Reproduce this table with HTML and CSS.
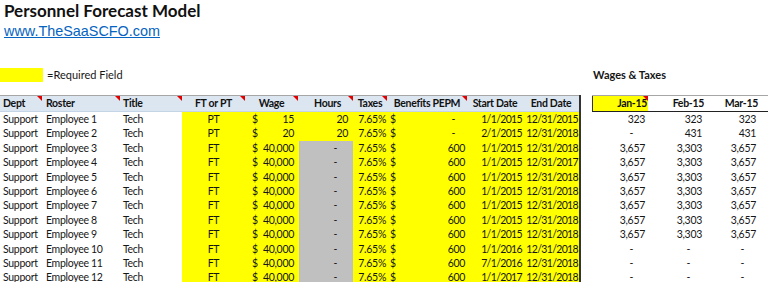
FILE: index.html
```html
<!DOCTYPE html>
<html lang="en">
<head>
<meta charset="utf-8">
<title>Personnel Forecast Model</title>
<link rel="stylesheet" href="styles.css">
</head>
<body>
<div class="title">Personnel Forecast Model</div>
<a class="site" href="#">www.TheSaaSCFO.com</a>
<div class="legend">
  <div class="legend-left"><span class="swatch"></span><span>=Required Field</span></div>
  <div class="legend-right">Wages &amp; Taxes</div>
</div>
<div class="sheet">
  <div class="roster">
    <div class="row head">
      <div class="c l note">Dept</div>
      <div class="c l2 note">Roster</div>
      <div class="c l3 note">Title</div>
      <div class="c ctr note">FT or PT</div>
      <div class="c ctr note">Wage</div>
      <div class="c ctr note hrs-h">Hours</div>
      <div class="c ctr note">Taxes</div>
      <div class="c ctr note">Benefits PEPM</div>
      <div class="c ctr">Start Date</div>
      <div class="c ctr">End Date</div>
    </div>
    <div class="row">
      <div class="c l">Support</div><div class="c l2">Employee 1</div><div class="c l3">Tech</div>
      <div class="c ctr y">PT</div>
      <div class="c money y"><span>$</span><span>15</span></div>
      <div class="c r hrs y">20</div>
      <div class="c r tax y">7.65%</div>
      <div class="c money ben y"><span>$</span><span class="dash">-</span></div>
      <div class="c r date y">1/1/2015</div>
      <div class="c r date y">12/31/2015</div>
    </div>
    <div class="row">
      <div class="c l">Support</div><div class="c l2">Employee 2</div><div class="c l3">Tech</div>
      <div class="c ctr y">PT</div>
      <div class="c money y"><span>$</span><span>20</span></div>
      <div class="c r hrs y">20</div>
      <div class="c r tax y">7.65%</div>
      <div class="c money ben y"><span>$</span><span class="dash">-</span></div>
      <div class="c r date y">2/1/2015</div>
      <div class="c r date y">12/31/2018</div>
    </div>
    <div class="row">
      <div class="c l">Support</div><div class="c l2">Employee 3</div><div class="c l3">Tech</div>
      <div class="c ctr y">FT</div>
      <div class="c money y"><span>$</span><span>40,000</span></div>
      <div class="c r hrs g"><span class="dash">-</span></div>
      <div class="c r tax y">7.65%</div>
      <div class="c money ben y"><span>$</span><span>600</span></div>
      <div class="c r date y">1/1/2015</div>
      <div class="c r date y">12/31/2018</div>
    </div>
    <div class="row">
      <div class="c l">Support</div><div class="c l2">Employee 4</div><div class="c l3">Tech</div>
      <div class="c ctr y">FT</div>
      <div class="c money y"><span>$</span><span>40,000</span></div>
      <div class="c r hrs g"><span class="dash">-</span></div>
      <div class="c r tax y">7.65%</div>
      <div class="c money ben y"><span>$</span><span>600</span></div>
      <div class="c r date y">1/1/2015</div>
      <div class="c r date y">12/31/2017</div>
    </div>
    <div class="row">
      <div class="c l">Support</div><div class="c l2">Employee 5</div><div class="c l3">Tech</div>
      <div class="c ctr y">FT</div>
      <div class="c money y"><span>$</span><span>40,000</span></div>
      <div class="c r hrs g"><span class="dash">-</span></div>
      <div class="c r tax y">7.65%</div>
      <div class="c money ben y"><span>$</span><span>600</span></div>
      <div class="c r date y">1/1/2015</div>
      <div class="c r date y">12/31/2018</div>
    </div>
    <div class="row">
      <div class="c l">Support</div><div class="c l2">Employee 6</div><div class="c l3">Tech</div>
      <div class="c ctr y">FT</div>
      <div class="c money y"><span>$</span><span>40,000</span></div>
      <div class="c r hrs g"><span class="dash">-</span></div>
      <div class="c r tax y">7.65%</div>
      <div class="c money ben y"><span>$</span><span>600</span></div>
      <div class="c r date y">1/1/2015</div>
      <div class="c r date y">12/31/2018</div>
    </div>
    <div class="row">
      <div class="c l">Support</div><div class="c l2">Employee 7</div><div class="c l3">Tech</div>
      <div class="c ctr y">FT</div>
      <div class="c money y"><span>$</span><span>40,000</span></div>
      <div class="c r hrs g"><span class="dash">-</span></div>
      <div class="c r tax y">7.65%</div>
      <div class="c money ben y"><span>$</span><span>600</span></div>
      <div class="c r date y">1/1/2015</div>
      <div class="c r date y">12/31/2018</div>
    </div>
    <div class="row">
      <div class="c l">Support</div><div class="c l2">Employee 8</div><div class="c l3">Tech</div>
      <div class="c ctr y">FT</div>
      <div class="c money y"><span>$</span><span>40,000</span></div>
      <div class="c r hrs g"><span class="dash">-</span></div>
      <div class="c r tax y">7.65%</div>
      <div class="c money ben y"><span>$</span><span>600</span></div>
      <div class="c r date y">1/1/2015</div>
      <div class="c r date y">12/31/2018</div>
    </div>
    <div class="row">
      <div class="c l">Support</div><div class="c l2">Employee 9</div><div class="c l3">Tech</div>
      <div class="c ctr y">FT</div>
      <div class="c money y"><span>$</span><span>40,000</span></div>
      <div class="c r hrs g"><span class="dash">-</span></div>
      <div class="c r tax y">7.65%</div>
      <div class="c money ben y"><span>$</span><span>600</span></div>
      <div class="c r date y">1/1/2015</div>
      <div class="c r date y">12/31/2018</div>
    </div>
    <div class="row">
      <div class="c l">Support</div><div class="c l2">Employee 10</div><div class="c l3">Tech</div>
      <div class="c ctr y">FT</div>
      <div class="c money y"><span>$</span><span>40,000</span></div>
      <div class="c r hrs g"><span class="dash">-</span></div>
      <div class="c r tax y">7.65%</div>
      <div class="c money ben y"><span>$</span><span>600</span></div>
      <div class="c r date y">1/1/2016</div>
      <div class="c r date y">12/31/2018</div>
    </div>
    <div class="row">
      <div class="c l">Support</div><div class="c l2">Employee 11</div><div class="c l3">Tech</div>
      <div class="c ctr y">FT</div>
      <div class="c money y"><span>$</span><span>40,000</span></div>
      <div class="c r hrs g"><span class="dash">-</span></div>
      <div class="c r tax y">7.65%</div>
      <div class="c money ben y"><span>$</span><span>600</span></div>
      <div class="c r date y">7/1/2016</div>
      <div class="c r date y">12/31/2018</div>
    </div>
    <div class="row">
      <div class="c l">Support</div><div class="c l2">Employee 12</div><div class="c l3">Tech</div>
      <div class="c ctr y">FT</div>
      <div class="c money y"><span>$</span><span>40,000</span></div>
      <div class="c r hrs g"><span class="dash">-</span></div>
      <div class="c r tax y">7.65%</div>
      <div class="c money ben y"><span>$</span><span>600</span></div>
      <div class="c r date y">1/1/2017</div>
      <div class="c r date y">12/31/2018</div>
    </div>
  </div>
  <div class="wages">
    <div class="wrow whead">
      <div class="m jan note">Jan-15</div>
      <div class="m">Feb-15</div>
      <div class="m">Mar-15</div>
      <div></div>
    </div>
    <div class="wrow"><div class="m">323</div><div class="m">323</div><div class="m">323</div><div></div></div>
    <div class="wrow"><div class="m"><span class="dash">-</span></div><div class="m">431</div><div class="m">431</div><div></div></div>
    <div class="wrow"><div class="m">3,657</div><div class="m">3,303</div><div class="m">3,657</div><div></div></div>
    <div class="wrow"><div class="m">3,657</div><div class="m">3,303</div><div class="m">3,657</div><div></div></div>
    <div class="wrow"><div class="m">3,657</div><div class="m">3,303</div><div class="m">3,657</div><div></div></div>
    <div class="wrow"><div class="m">3,657</div><div class="m">3,303</div><div class="m">3,657</div><div></div></div>
    <div class="wrow"><div class="m">3,657</div><div class="m">3,303</div><div class="m">3,657</div><div></div></div>
    <div class="wrow"><div class="m">3,657</div><div class="m">3,303</div><div class="m">3,657</div><div></div></div>
    <div class="wrow"><div class="m">3,657</div><div class="m">3,303</div><div class="m">3,657</div><div></div></div>
    <div class="wrow"><div class="m"><span class="dash">-</span></div><div class="m"><span class="dash">-</span></div><div class="m"><span class="dash">-</span></div><div></div></div>
    <div class="wrow"><div class="m"><span class="dash">-</span></div><div class="m"><span class="dash">-</span></div><div class="m"><span class="dash">-</span></div><div></div></div>
    <div class="wrow"><div class="m"><span class="dash">-</span></div><div class="m"><span class="dash">-</span></div><div class="m"><span class="dash">-</span></div><div></div></div>
  </div>
</div>
</body>
</html>
```
FILE: styles.css
```css
* { box-sizing: content-box; }
html, body { margin: 0; padding: 0; background: #ffffff; }
body {
  font-family: Lato, "Open Sans", sans-serif;
  font-size: 11px;
  color: #161616;
  overflow: hidden;
}
.title {
  font-weight: 700;
  font-size: 17px;
  line-height: 22px;
  padding-left: 4px;
  color: #111;
}
.site {
  display: inline-block;
  margin-left: 4px;
  font-family: "Liberation Sans", Arial, sans-serif;
  font-size: 14.4px;
  line-height: 19px;
  color: #0563c1;
  text-decoration: underline;
}
.legend {
  display: flex;
  margin-top: 27px;
  height: 14px;
  line-height: 14px;
}
.legend-left {
  width: 593px;
  display: flex;
  gap: 4px;
}
.swatch {
  width: 43px;
  background: #ffff00;
}
.legend-right { font-weight: 700; }

.sheet {
  display: flex;
  align-items: flex-start;
  margin-top: 13px;
  font-size: 10.5px;
  letter-spacing: -0.3px;
}
.roster {
  width: 579px;
  border-right: 2px solid #333;
}
.row {
  display: grid;
  grid-template-columns: 42px 78px 62px 63px 53px 55px 34px 80px 56px 56px;
  height: 14.4px;
  line-height: 14.4px;
  white-space: nowrap;
}
.head {
  height: 15px;
  line-height: 15px;
  background: #dce6f1;
  border-top: 1px solid #a6a6a6;
  border-bottom: 1px solid #c5d5e8;
  font-weight: 700;
  color: #111;
}
.c { position: relative; overflow: visible; }
.l { padding-left: 3px; }
.l2 { padding-left: 4px; }
.l3 { padding-left: 3px; }
.ctr { text-align: center; }
.r { text-align: right; }
.hrs { padding-right: 5px; }
.hrs-h { padding-left: 4px; }
.tax { padding-right: 1px; }
.date { padding-right: 1px; letter-spacing: -0.65px; }
.y { background: #ffff00; }
.g { background: #c0c0c0; box-shadow: inset 1px 0 0 #ffff00; }
.money {
  display: flex;
  justify-content: space-between;
  padding: 0 4px 0 7px;
}
.ben { padding: 0 2px 0 3px; }
.dash { padding-right: 10px; }
.g .dash { padding-right: 11px; }

.note::after {
  content: "";
  position: absolute;
  top: 0;
  right: 0;
  border-top: 5px solid #e00000;
  border-left: 5px solid transparent;
}

.wages {
  flex: 1;
  margin-left: 11px;
}
.wrow {
  display: grid;
  grid-template-columns: 56px 57px 54px 1fr;
  height: 14.4px;
  line-height: 14.4px;
  white-space: nowrap;
}
.whead {
  height: 15px;
  line-height: 15px;
  border-top: 1px solid #a6a6a6;
  border-bottom: 1px solid #222;
  font-weight: 700;
  color: #111;
}
.m {
  position: relative;
  text-align: right;
  padding-right: 3px;
}
.whead .m { padding-right: 1px; }
.jan {
  background: #ffff00;
  box-shadow: inset 1px 0 0 #333;
}
.m .dash { padding-right: 12px; }
```
